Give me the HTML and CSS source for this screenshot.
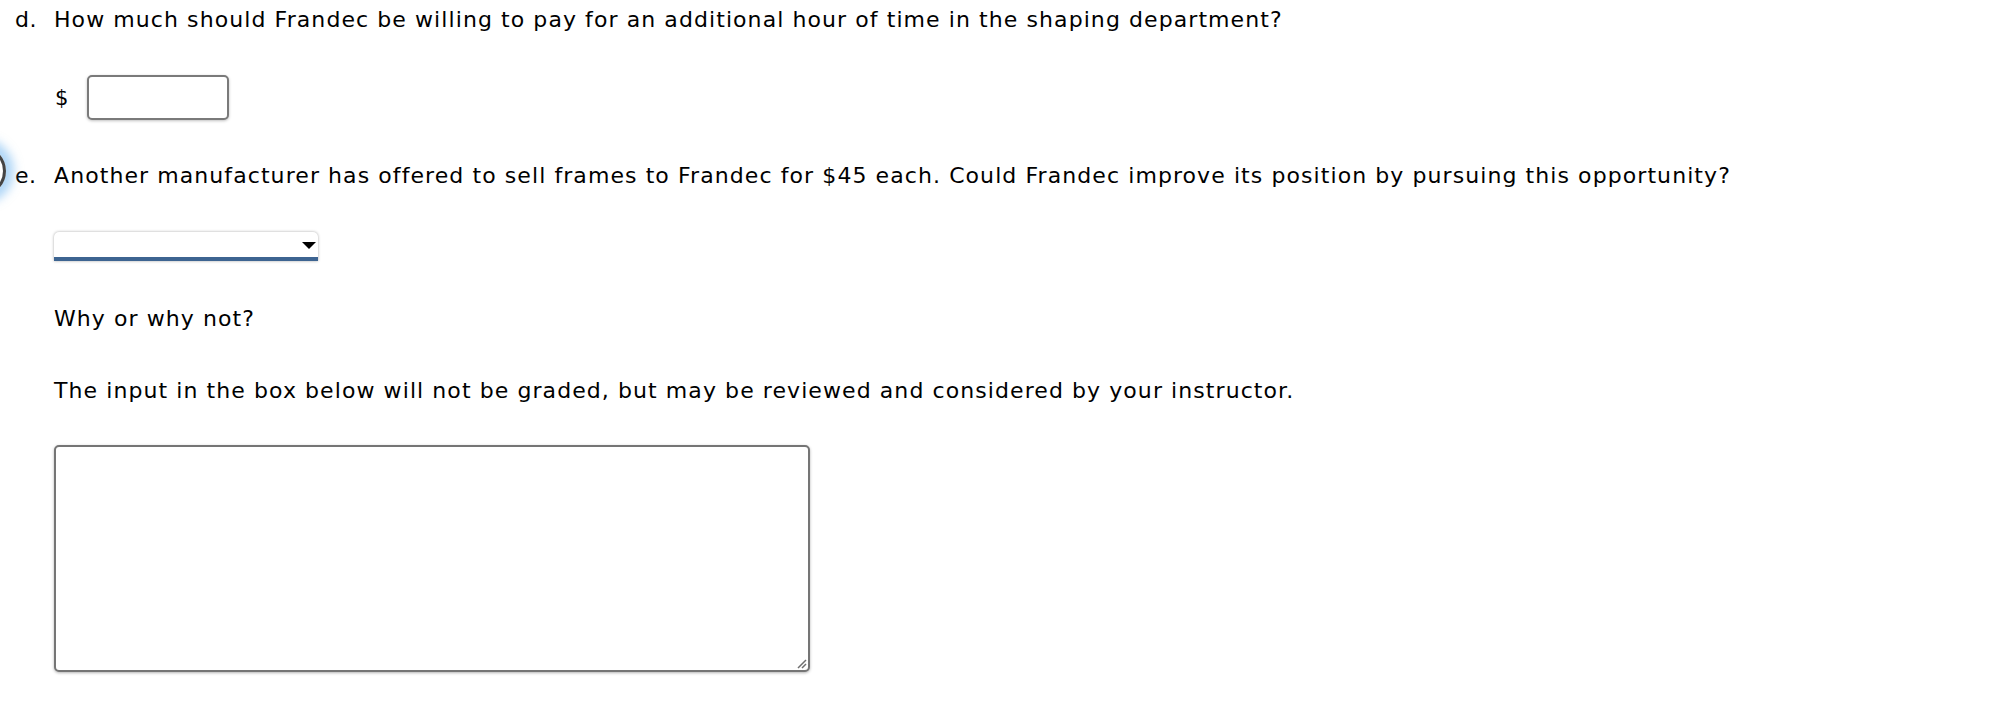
FILE: index.html
```html
<!DOCTYPE html>
<html>
<head>
<meta charset="utf-8">
<link rel="stylesheet" href="styles.css">
</head>
<body>
<div class="focus-ring"></div>
<div class="page">
  <div class="q q-d">
    <span class="label">d.</span>
    <div class="content">
      <p class="text">How much should Frandec be willing to pay for an additional hour of time in the shaping department?</p>
      <div class="answer">
        <span class="dollar">$</span>
        <span class="input-box"></span>
      </div>
    </div>
  </div>
  <div class="q q-e">
    <span class="label">e.</span>
    <div class="content">
      <p class="text">Another manufacturer has offered to sell frames to Frandec for $45 each. Could Frandec improve its position by pursuing this opportunity?</p>
      <div class="select">
        <span class="arrow"></span>
      </div>
      <p class="text why">Why or why not?</p>
      <p class="text note">The input in the box below will not be graded, but may be reviewed and considered by your instructor.</p>
      <div class="textarea">
        <svg class="grip" width="12" height="12" viewBox="0 0 12 12"><path d="M11 3 L3 11 M11 7 L7 11" stroke="#6f6f6f" stroke-width="1.5" fill="none"/></svg>
      </div>
    </div>
  </div>
</div>
</body>
</html>
```

FILE: styles.css
```css
html, body {
  margin: 0;
  padding: 0;
  background: #ffffff;
}
body {
  font-family: "DejaVu Sans", Verdana, sans-serif;
  font-size: 22px;
  letter-spacing: 1.08px;
  line-height: 24px;
  color: #000;
  position: relative;
  overflow: hidden;
  height: 701px;
}
.page {
  display: flex;
  flex-direction: column;
  padding-top: 8px;
}
.q {
  display: flex;
  flex-direction: row;
}
.label {
  width: 39px;
  padding-left: 15px;
  flex: none;
  letter-spacing: 0.5px;
}
.content {
  display: flex;
  flex-direction: column;
  align-items: flex-start;
}
.text {
  margin: 0;
  white-space: nowrap;
}
.answer {
  display: flex;
  align-items: center;
  margin-top: 43px;
}
.dollar {
  margin-left: 1px;
  width: 32px;
  letter-spacing: 0;
  font-size: 21px;
}
.input-box {
  display: block;
  width: 138px;
  height: 41px;
  border: 2px solid #7a7a7a;
  border-radius: 5px;
  box-shadow: 0 1px 3px rgba(0,0,0,0.25);
  background: #fff;
}
.q-e {
  margin-top: 44px;
}
.select {
  position: relative;
  margin-top: 44px;
  width: 264px;
  height: 25px;
  background: #fff;
  border-radius: 5px 5px 0 0;
  box-shadow: 0 0 3px rgba(0,0,0,0.35);
  border-bottom: 4px solid #3d6491;
}
.arrow {
  position: absolute;
  right: 2px;
  top: 10px;
  width: 0;
  height: 0;
  border-left: 7px solid transparent;
  border-right: 7px solid transparent;
  border-top: 7px solid #000;
}
.why {
  margin-top: 46px;
}
.note {
  margin-top: 48px;
}
.textarea {
  position: relative;
  margin-top: 42px;
  width: 752px;
  height: 223px;
  border: 2px solid #757575;
  border-radius: 5px;
  box-shadow: 0 1px 3px rgba(0,0,0,0.3);
  background: #fff;
}
.grip {
  position: absolute;
  right: 1px;
  bottom: 1px;
}
.focus-ring {
  position: absolute;
  left: -44px;
  top: 146px;
  width: 44px;
  height: 44px;
  border-radius: 50%;
  border: 3px solid #444;
  box-shadow: 0 0 10px 8px rgba(100,175,240,0.5);
}
```
